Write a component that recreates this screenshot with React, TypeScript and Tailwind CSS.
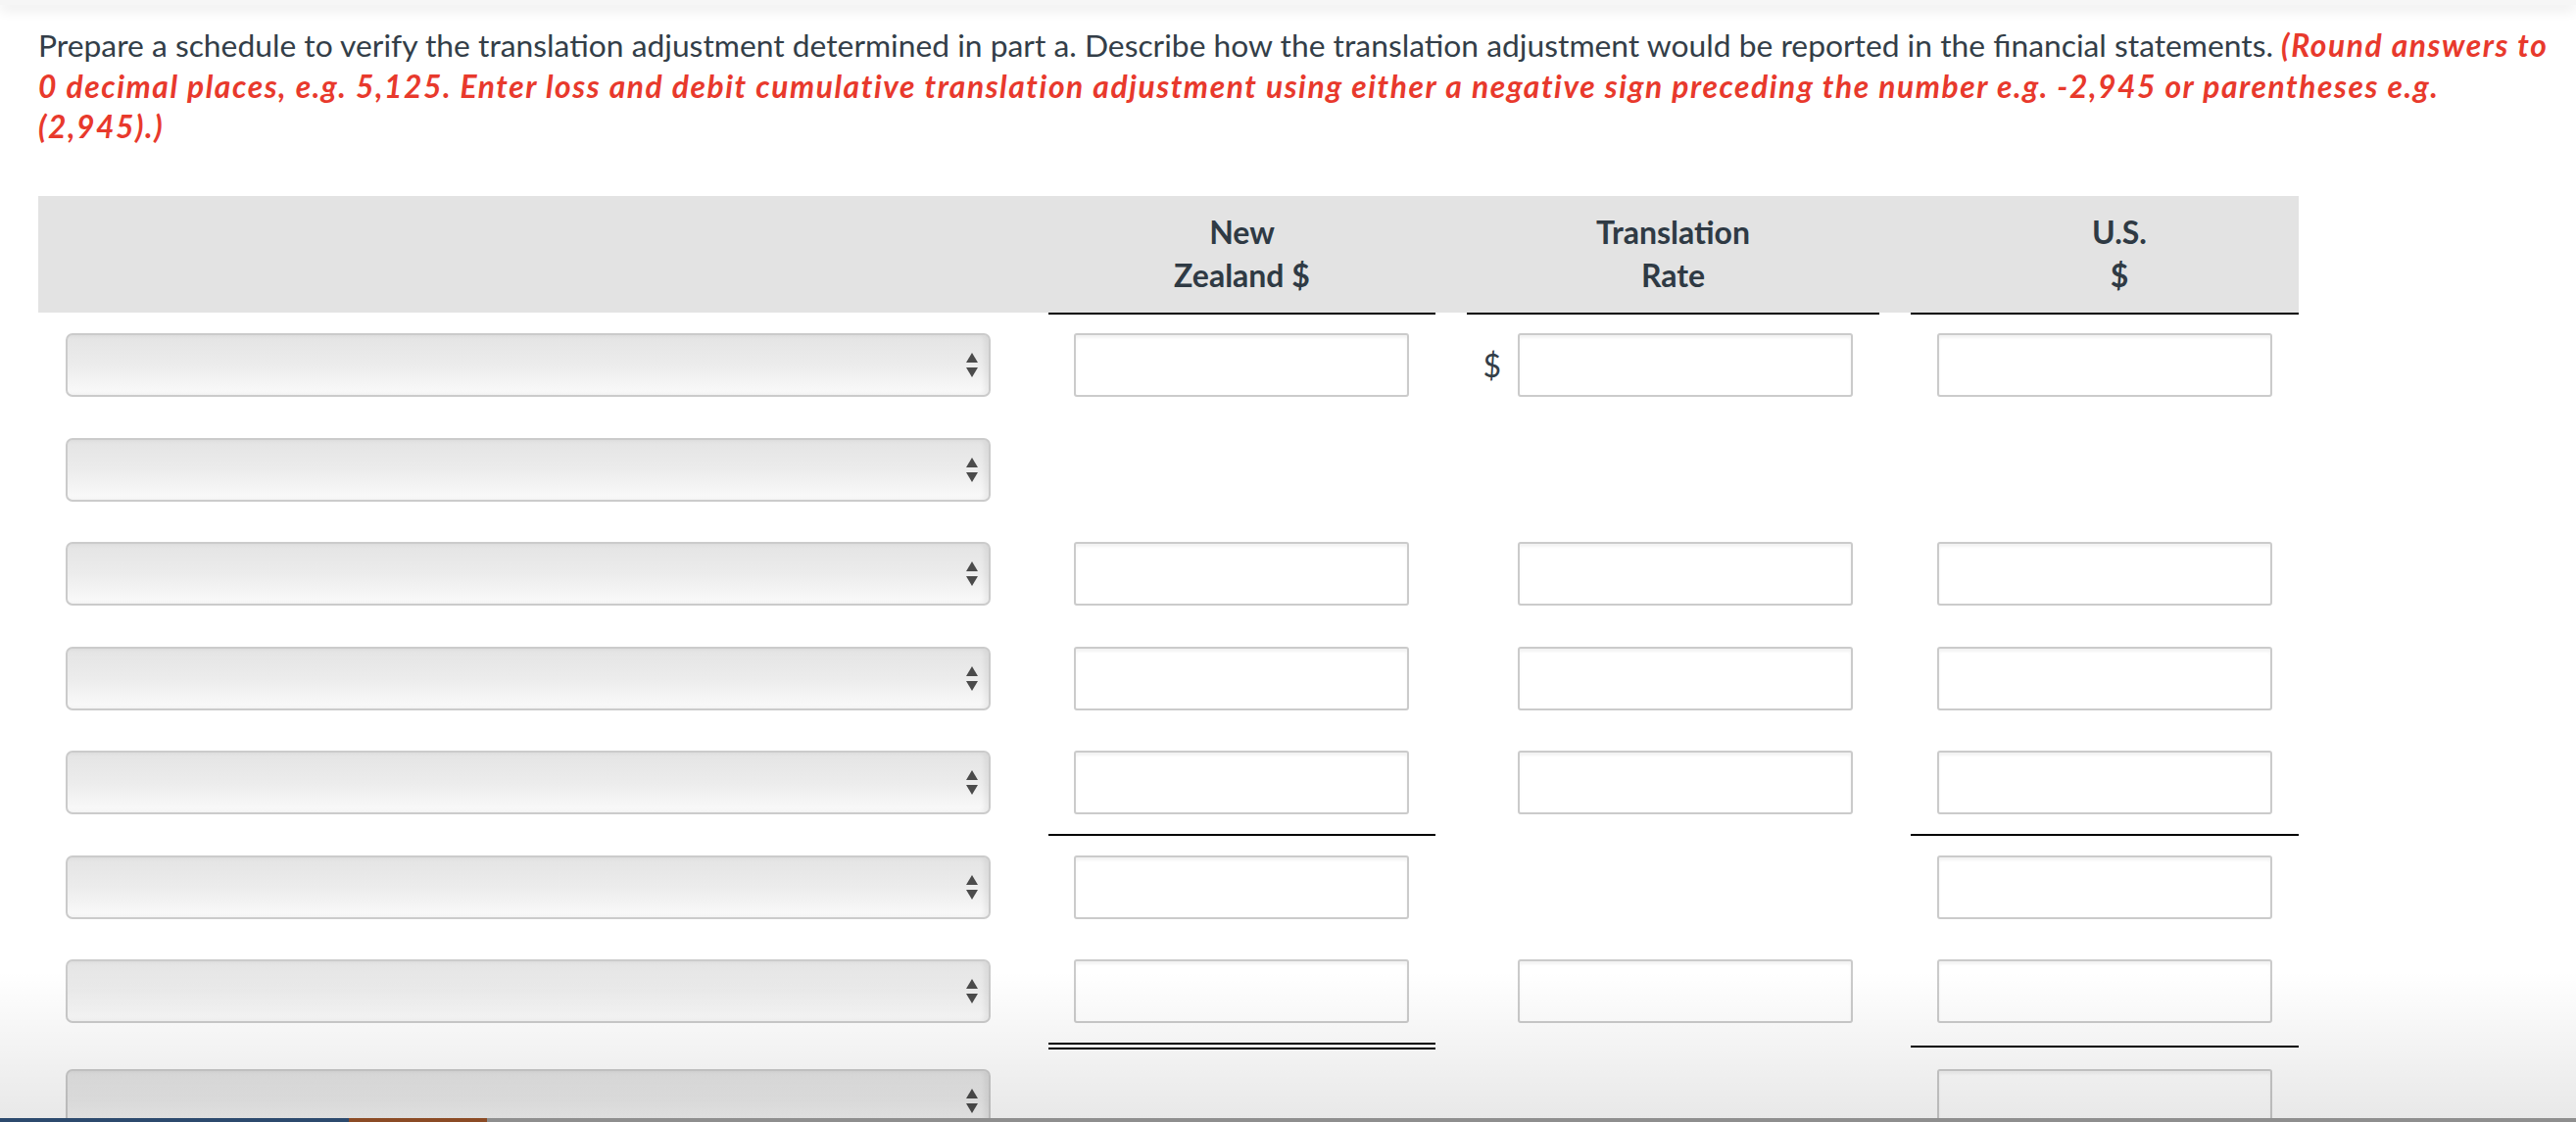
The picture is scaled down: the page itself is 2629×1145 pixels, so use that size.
import React from "react";

type Line = "none" | "single" | "double";

interface Row {
  c1: boolean;
  c2: boolean;
  c3: boolean;
  dollar?: boolean;
  line1?: Line;
  line3?: Line;
}

const rows: Row[] = [
  { c1: true, c2: true, c3: true, dollar: true },
  { c1: false, c2: false, c3: false },
  { c1: true, c2: true, c3: true },
  { c1: true, c2: true, c3: true },
  { c1: true, c2: true, c3: true, line1: "single", line3: "single" },
  { c1: true, c2: false, c3: true },
  { c1: true, c2: true, c3: true, line1: "double", line3: "single" },
  { c1: false, c2: false, c3: true },
];

function SelectBox() {
  return (
    <div className="ml-[28px] w-[944px] h-[65px] rounded-[7px] border-2 border-[#cbcbcb] bg-gradient-to-b from-[#e4e4e4] via-[#ececec] to-[#fafafa] shadow-[inset_-4px_0_5px_rgba(0,0,0,0.06)] flex items-center justify-end pr-[11px]">
      {/* up / down arrows */}
      <svg width="12" height="25" viewBox="0 0 12 25">
        <polygon points="6,0 12,10 0,10" fill="#4b4b4b" />
        <polygon points="0,15 12,15 6,25" fill="#4b4b4b" />
      </svg>
    </div>
  );
}

function InputBox() {
  return (
    <div className="w-[342px] h-[65px] rounded-[3px] border-2 border-[#cbcbcb] bg-white shadow-[inset_0_3px_3px_rgba(0,0,0,0.05)]" />
  );
}

function lineClass(line: Line | undefined, double3?: boolean) {
  if (line === "double") return "pb-[20px] border-b-[7px] border-double border-black";
  if (line === "single")
    return double3 ? "pb-[22.5px] border-b-2 border-black" : "pb-[20px] border-b-2 border-black";
  return "pb-[20px] border-b-2 border-transparent";
}

export default function App() {
  return (
    <div className="relative h-[1145px] overflow-hidden bg-white font-[family-name:Lato,sans-serif] text-[#333e48]">
      {/* top band */}
      <div className="relative z-10 h-[5px] bg-[#f6f6f6] shadow-[0_3px_14px_rgba(0,0,0,0.16)]" />

      {/* question */}
      <p className="mt-[21px] pl-[39px] pr-[20px] text-[31.8px] leading-[41.5px]">
        Prepare a schedule to verify the translation adjustment determined in part a. Describe how the translation
        adjustment would be reported in the financial statements.{" "}
        <span className="font-bold italic tracking-[1.55px] text-[#e8392c]">
          (Round answers to 0 decimal places, e.g. 5,125. Enter loss and debit cumulative translation adjustment using
          either a negative sign preceding the number e.g. -2,945 or parentheses e.g. (2,945).)
        </span>
      </p>

      {/* table */}
      <div className="mt-[49px] ml-[39px] w-[2307px]">
        {/* header */}
        <div className="grid grid-cols-[1015px_427px_453px_412px] h-[119px] bg-[#e3e3e3] font-bold text-[32px] leading-[44px] text-[#2f3a44]">
          <div />
          <div className="px-[16px] pt-[15px] text-center">
            New
            <br />
            Zealand $
          </div>
          <div className="px-[16px] pt-[15px] text-center">
            Translation
            <br />
            Rate
          </div>
          <div className="pl-[46px] pt-[15px] text-center">
            U.S.
            <br />
            $
          </div>
        </div>
        <div className="grid grid-cols-[1015px_427px_453px_412px] h-[2px]">
          <div />
          <div className="px-[16px]">
            <div className="h-[2px] bg-black" />
          </div>
          <div className="px-[16px]">
            <div className="h-[2px] bg-black" />
          </div>
          <div className="pl-[16px]">
            <div className="h-[2px] bg-black" />
          </div>
        </div>

        {/* rows */}
        {rows.map((r, i) => (
          <div key={i} className="grid grid-cols-[1015px_427px_453px_412px] items-start">
            <div className="pt-[19.5px]">
              <SelectBox />
            </div>
            <div className="px-[16px]">
              <div className={`pt-[19.5px] flex justify-end pr-[27px] ${lineClass(r.line1)}`}>
                {r.c1 ? <InputBox /> : <div className="h-[65px]" />}
              </div>
            </div>
            <div className="px-[16px]">
              <div className="pt-[19.5px] pb-[20px] border-b-2 border-transparent flex items-center justify-end gap-[17px] pr-[27px]">
                {r.dollar && <span className="text-[32px] leading-none text-[#333e48]">$</span>}
                {r.c2 ? <InputBox /> : <div className="h-[65px]" />}
              </div>
            </div>
            <div className="pl-[16px]">
              <div className={`pt-[19.5px] flex justify-end pr-[27px] ${lineClass(r.line3, r.line1 === "double")}`}>
                {r.c3 ? <InputBox /> : <div className="h-[65px]" />}
              </div>
            </div>
          </div>
        ))}
      </div>

      {/* bottom fade */}
      <div className="pointer-events-none absolute inset-x-0 bottom-[4px] h-[150px] bg-gradient-to-b from-transparent to-[rgba(0,0,0,0.09)]" />

      {/* bottom progress bar */}
      <div className="absolute inset-x-0 bottom-0 h-[4px] flex">
        <div className="w-[356px] bg-[#2c4a6d]" />
        <div className="w-[141px] bg-[#8b4b25]" />
        <div className="flex-1 bg-[#8e8e8e]" />
      </div>
    </div>
  );
}
